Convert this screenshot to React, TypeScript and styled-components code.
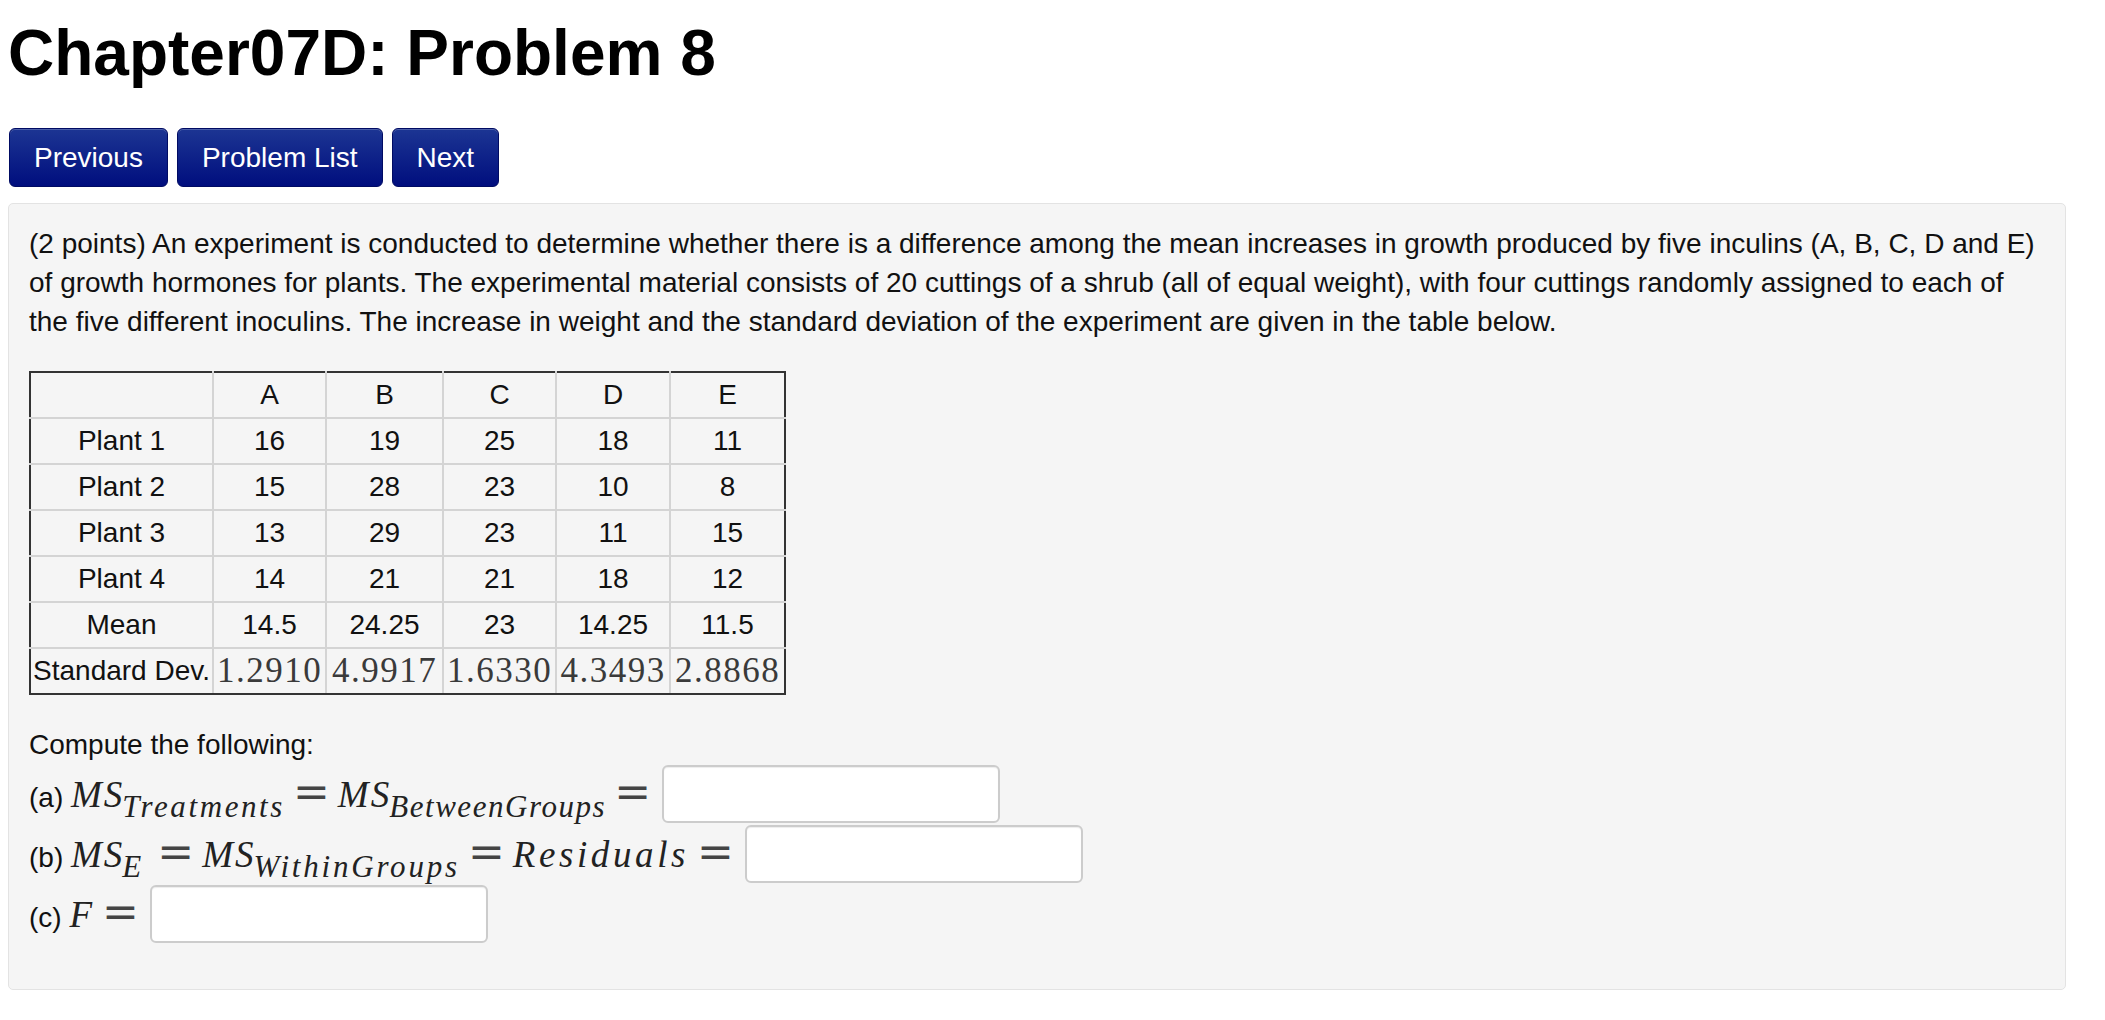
import React from 'react';
import styled, { createGlobalStyle } from 'styled-components';

const GlobalStyle = createGlobalStyle`
    html,
    body {
        margin: 0;
        padding: 0;
        background: #ffffff;
    }
    body {
        font-family: 'Liberation Sans', Arial, Helvetica, sans-serif;
        color: #111;
    }
`;

const Page = styled.div`
    padding: 18px 39px 0 8px;
`;

const Title = styled.h1`
    margin: 0;
    font-size: 64px;
    line-height: 70px;
    font-weight: bold;
    color: #000;
`;

const Nav = styled.div`
    display: flex;
    gap: 9px;
    margin-top: 40px;
    padding-left: 1px;
`;

const NavButton = styled.button`
    font-family: inherit;
    font-size: 28px;
    line-height: 37px;
    padding: 10px 24px;
    color: #fff;
    border: 1px solid #000b63;
    border-radius: 6px;
    background: linear-gradient(to bottom, #1c3593, #000e7e);
    box-shadow: inset 0 1px 0 rgba(255, 255, 255, 0.22);
    cursor: pointer;
`;

const Well = styled.div`
    margin-top: 16px;
    background: #f5f5f5;
    border: 1px solid #e3e3e3;
    border-radius: 5px;
    padding: 20px 16px 46px 20px;
    font-size: 28px;
    line-height: 37px;
`;

const Intro = styled.p`
    margin: 0;
    line-height: 39px;
`;

const DataTable = styled.table`
    margin-top: 30px;
    border-collapse: collapse;
    table-layout: fixed;
    width: 755px;
`;

const Col = styled.col<{ $w: number }>`
    width: ${(p) => p.$w}px;
`;

const Row = styled.tr`
    & > td:first-child {
        border-left-color: #333;
    }
    & > td:last-child {
        border-right-color: #333;
    }
    &:first-child > td {
        border-top-color: #333;
    }
    &:last-child > td {
        border-bottom-color: #333;
    }
`;

const Cell = styled.td<{ $math?: boolean }>`
    border: 2px solid #d4d4d4;
    height: 44px;
    padding: 0 1px;
    line-height: 44px;
    text-align: center;
    white-space: nowrap;
    overflow: visible;
    font-size: ${(p) => (p.$math ? '35px' : '28px')};
    font-family: ${(p) =>
        p.$math ? "'Liberation Serif', 'Times New Roman', serif" : "'Liberation Sans', Arial, sans-serif"};
    letter-spacing: ${(p) => (p.$math ? '1.5px' : '0')};
    color: ${(p) => (p.$math ? '#3a3a3a' : '#111')};
`;

const Prompt = styled.div`
    margin-top: 31px;
`;

const AnswerRow = styled.div`
    display: flex;
    align-items: center;
    height: 58px;
    margin-top: 2px;
`;

const Label = styled.span`
    white-space: nowrap;
    line-height: 37px;
`;

const MathVar = styled.span<{ $ls?: number }>`
    font-family: 'Liberation Serif', 'Times New Roman', serif;
    font-style: italic;
    font-size: 37px;
    color: #222;
    letter-spacing: ${(p) => p.$ls ?? 0}px;
`;

const Sub = styled.span<{ $ls?: number }>`
    font-family: 'Liberation Serif', 'Times New Roman', serif;
    font-style: italic;
    font-size: 31px;
    letter-spacing: ${(p) => p.$ls ?? 2.6}px;
    color: #222;
    vertical-align: -10px;
    line-height: 0;
`;

const Eq = styled.span`
    font-family: 'DejaVu Serif', serif;
    font-size: 44px;
    margin: 0 8px;
    color: #444;
`;

const AnswerInput = styled.input`
    width: 338px;
    height: 58px;
    box-sizing: border-box;
    margin: 0 0 0 3px;
    padding: 4px 12px;
    border: 2px solid #cccccc;
    border-radius: 6px;
    background: #fff;
    box-shadow: inset 0 1px 1px rgba(0, 0, 0, 0.075);
    font-family: inherit;
    font-size: 28px;
`;

const columns = [183, 113, 117, 113, 114, 115];

const tableRows: { label: string; values: string[]; math?: boolean }[] = [
    { label: '', values: ['A', 'B', 'C', 'D', 'E'] },
    { label: 'Plant 1', values: ['16', '19', '25', '18', '11'] },
    { label: 'Plant 2', values: ['15', '28', '23', '10', '8'] },
    { label: 'Plant 3', values: ['13', '29', '23', '11', '15'] },
    { label: 'Plant 4', values: ['14', '21', '21', '18', '12'] },
    { label: 'Mean', values: ['14.5', '24.25', '23', '14.25', '11.5'] },
    { label: 'Standard Dev.', values: ['1.2910', '4.9917', '1.6330', '4.3493', '2.8868'], math: true },
];

function MS({ sub, ls }: { sub: string; ls?: number }) {
    return (
        <>
            <MathVar $ls={2}>M</MathVar>
            <MathVar>S</MathVar>
            <Sub $ls={ls}>{sub}</Sub>
        </>
    );
}

export default function App() {
    return (
        <>
            <GlobalStyle />
            <Page>
                <Title>Chapter07D: Problem 8</Title>
                <Nav>
                    <NavButton>Previous</NavButton>
                    <NavButton>Problem List</NavButton>
                    <NavButton>Next</NavButton>
                </Nav>
                <Well>
                    <Intro>
                        (2 points) An experiment is conducted to determine whether there is a difference among the mean
                        increases in growth produced by five inculins (A, B, C, D and E) of growth hormones for plants.
                        The experimental material consists of 20 cuttings of a shrub (all of equal weight), with four
                        cuttings randomly assigned to each of the five different inoculins. The increase in weight and
                        the standard deviation of the experiment are given in the table below.
                    </Intro>

                    <DataTable>
                        <colgroup>
                            {columns.map((w, i) => (
                                <Col key={i} $w={w} />
                            ))}
                        </colgroup>
                        <tbody>
                            {tableRows.map((row) => (
                                <Row key={row.label || 'head'}>
                                    <Cell>{row.label}</Cell>
                                    {row.values.map((v, i) => (
                                        <Cell key={i} $math={row.math}>
                                            {v}
                                        </Cell>
                                    ))}
                                </Row>
                            ))}
                        </tbody>
                    </DataTable>

                    <Prompt>Compute the following:</Prompt>

                    <AnswerRow>
                        <Label>
                            (a) <MS sub="Treatments" />
                            <Eq>=</Eq>
                            <MS sub="BetweenGroups" ls={1.55} />
                            <Eq>=</Eq>
                        </Label>
                        <AnswerInput type="text" />
                    </AnswerRow>

                    <AnswerRow>
                        <Label>
                            (b) <MS sub="E" ls={8} />
                            <Eq>=</Eq>
                            <MS sub="WithinGroups" ls={2.8} />
                            <Eq>=</Eq>
                            <MathVar $ls={3.6}>Residuals</MathVar>
                            <Eq>=</Eq>
                        </Label>
                        <AnswerInput type="text" />
                    </AnswerRow>

                    <AnswerRow>
                        <Label>
                            (c) <MathVar $ls={2}>F</MathVar>
                            <Eq>=</Eq>
                        </Label>
                        <AnswerInput type="text" />
                    </AnswerRow>
                </Well>
            </Page>
        </>
    );
}
